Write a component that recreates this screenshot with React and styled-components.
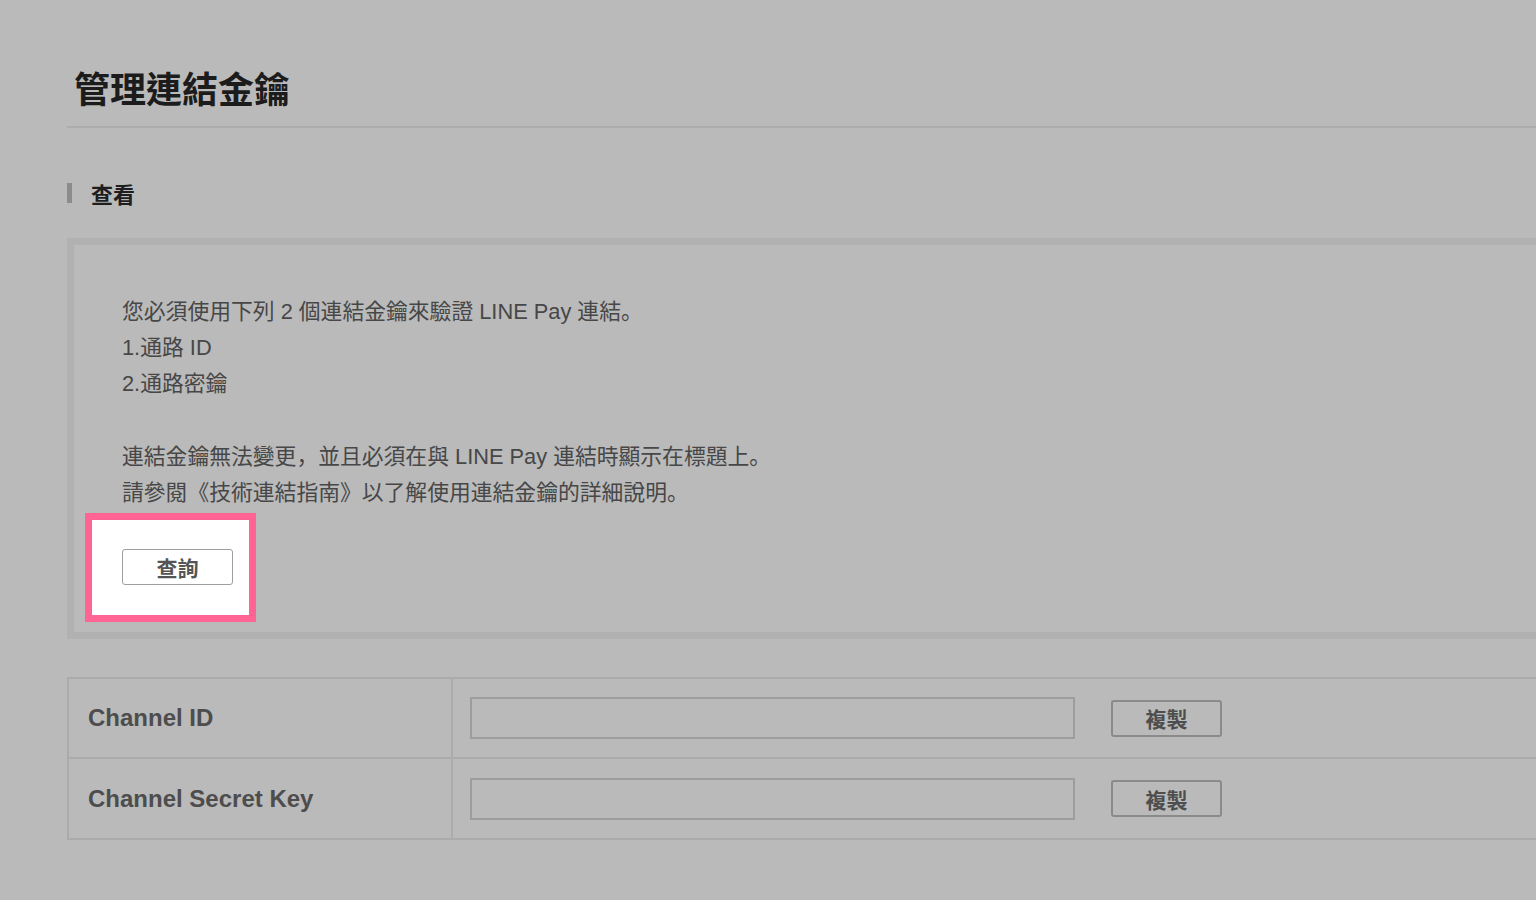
import React from "react";
import styled, { createGlobalStyle } from "styled-components";

const GlobalStyle = createGlobalStyle`
  html, body {
    margin: 0;
    padding: 0;
    background: #bababa;
    overflow: hidden;
  }
  body {
    font-family: "Liberation Sans", "Noto Sans CJK JP", "Noto Sans CJK TC", sans-serif;
    color: #4a4a4a;
  }
  * { box-sizing: border-box; }
`;

const Page = styled.div`
  padding: 62px 0 0 67px;
  width: 1536px;
  height: 900px;
`;

const Title = styled.h1`
  margin: 0;
  padding: 0 0 14px 7px;
  font-family: "Noto Sans CJK TC", sans-serif;
  font-size: 36px;
  line-height: 50px;
  font-weight: 700;
  color: #1c1c1c;
  border-bottom: 2px solid #acacac;
  margin-right: -20px;
`;

const SectionHead = styled.div`
  display: flex;
  align-items: center;
  gap: 19px;
  margin-top: 50px;
  height: 30px;
`;

const Bar = styled.span`
  width: 5px;
  height: 20px;
  background: #8c8c8c;
`;

const SectionTitle = styled.h2`
  margin: 0;
  font-family: "Noto Sans CJK TC", sans-serif;
  font-size: 22px;
  font-weight: 700;
  color: #1e1e1e;
`;

const InfoBox = styled.div`
  margin-top: 30px;
  margin-right: -20px;
  border: 7px solid #b1b1b1;
  padding: 49px 48px 10px 48px;
`;

const Paragraph = styled.p`
  margin: 0;
  font-size: 21.8px;
  line-height: 36px;
  color: #474747;
  & + & { margin-top: 37px; }
`;

const Spotlight = styled.div`
  width: fit-content;
  margin: 2px 0 0 -37px;
  padding: 29px 16px 30px 30px;
  border: 7px solid #ff6495;
  background: #ffffff;
`;

const Button = styled.button`
  display: flex;
  align-items: center;
  justify-content: center;
  width: 111px;
  height: ${(p) => p.$h || 36}px;
  padding: 0;
  border: ${(p) => (p.$dim ? "2px solid #8a8a8a" : "1.5px solid #9e9e9e")};
  border-radius: 3px;
  background: ${(p) => (p.$dim ? "transparent" : "#ffffff")};
  font-family: "Noto Sans CJK TC", sans-serif;
  font-size: 21px;
  font-weight: 700;
  color: ${(p) => (p.$dim ? "#4e4e4e" : "#555555")};
  cursor: pointer;
`;

const Table = styled.div`
  margin-top: 38px;
  margin-right: -20px;
  border: 2px solid #ababab;
  display: grid;
  grid-template-columns: 384px 1fr;
`;

const LabelCell = styled.div`
  height: ${(p) => p.$h}px;
  display: flex;
  align-items: center;
  padding-left: 19px;
  border-right: 2px solid #ababab;
  border-top: ${(p) => (p.$first ? "none" : "2px solid #ababab")};
  font-family: "Liberation Sans", "Noto Sans", sans-serif;
  font-size: 24px;
  font-weight: 700;
  color: #4d4d4d;
`;

const ValueCell = styled.div`
  height: ${(p) => p.$h}px;
  display: flex;
  align-items: center;
  gap: 36px;
  padding-left: 17px;
  border-top: ${(p) => (p.$first ? "none" : "2px solid #ababab")};
`;

const KeyInput = styled.input`
  width: 605px;
  height: 42px;
  border: 2px solid #9d9d9d;
  background: transparent;
  outline: none;
`;

const rows = [
  { label: "Channel ID", h: 78 },
  { label: "Channel Secret Key", h: 81 },
];

export default function App() {
  return (
    <>
      <GlobalStyle />
      <Page>
        <Title>管理連結金鑰</Title>
        <SectionHead>
          <Bar />
          <SectionTitle>查看</SectionTitle>
        </SectionHead>
        <InfoBox>
          <Paragraph>
            您必須使用下列 2 個連結金鑰來驗證 LINE Pay 連結。
            <br />
            1.通路 ID
            <br />
            2.通路密鑰
          </Paragraph>
          <Paragraph>
            連結金鑰無法變更，並且必須在與 LINE Pay 連結時顯示在標題上。
            <br />
            請參閱《技術連結指南》以了解使用連結金鑰的詳細說明。
          </Paragraph>
          <Spotlight>
            <Button>查詢</Button>
          </Spotlight>
        </InfoBox>
        <Table>
          {rows.map((r, i) => (
            <React.Fragment key={r.label}>
              <LabelCell $h={r.h} $first={i === 0}>
                {r.label}
              </LabelCell>
              <ValueCell $h={r.h} $first={i === 0}>
                <KeyInput readOnly />
                <Button $dim $h={37}>複製</Button>
              </ValueCell>
            </React.Fragment>
          ))}
        </Table>
      </Page>
    </>
  );
}
